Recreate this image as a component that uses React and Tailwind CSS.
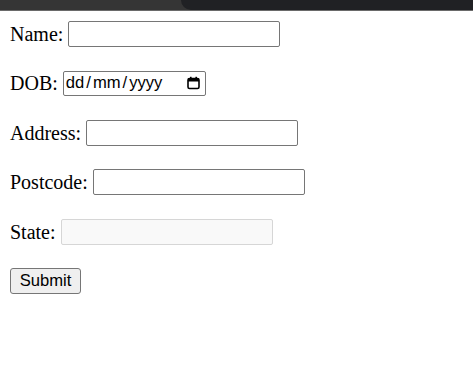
import React from 'react';

const serif = { fontFamily: '"Liberation Serif", "Times New Roman", serif' };

function TextBox({ width = 'w-[212px]', disabled = false }) {
  return (
    <input
      type="text"
      disabled={disabled}
      className={`${width} h-[26px] rounded-[2px] border px-[3px] outline-none ${
        disabled ? 'border-[#d6d6d6] bg-[#f9f9f9]' : 'border-[#767676] bg-white'
      }`}
    />
  );
}

function CalendarIcon() {
  return (
    <svg width="13" height="14" viewBox="0 0 13 14" className="shrink-0">
      <rect x="1" y="2.5" width="11" height="10" rx="1.5" fill="none" stroke="#000" strokeWidth="1.6" />
      <rect x="1" y="2.5" width="11" height="3" fill="#000" />
      <rect x="3" y="0.8" width="1.6" height="2.5" fill="#000" />
      <rect x="8.4" y="0.8" width="1.6" height="2.5" fill="#000" />
    </svg>
  );
}

function DateBox() {
  const sep = <span className="px-[2px]">/</span>;
  return (
    <div className="flex h-[25px] w-[143px] items-center justify-between rounded-[2px] border border-[#767676] bg-white pl-[2px] pr-[5px]">
      <span
        className="flex text-[16.6px] leading-none text-black"
        style={{ fontFamily: '"Liberation Sans", Arial, sans-serif' }}
      >
        dd{sep}mm{sep}yyyy
      </span>
      <CalendarIcon />
    </div>
  );
}

export default function App() {
  const rows = [
    { label: 'Name:', field: <TextBox /> },
    { label: 'DOB:', field: <DateBox /> },
    { label: 'Address:', field: <TextBox /> },
    { label: 'Postcode:', field: <TextBox /> },
    { label: 'State:', field: <TextBox disabled /> },
  ];

  return (
    <div className="min-h-[381px] bg-white" style={serif}>
      {/* browser chrome strip */}
      <div className="flex h-[10px] bg-[#353535]">
        <div className="ml-[181px] flex-1 rounded-bl-[10px] bg-[#202124]" />
      </div>
      <div className="h-px bg-[#6a6a6a]" />

      <form className="flex flex-col gap-[23.4px] px-[10px] pt-[10px]">
        {rows.map((row) => (
          <div key={row.label} className="flex h-[26px] items-center gap-[5px]">
            <label className="text-[20px] leading-none text-black">{row.label}</label>
            {row.field}
          </div>
        ))}
        <div className="flex h-[26px] items-center">
          <button
            type="button"
            className="h-[26px] w-[71px] rounded-[3px] border border-[#767676] bg-[#efefef] text-[16.6px] leading-none text-black"
            style={{ fontFamily: '"Liberation Sans", Arial, sans-serif' }}
          >
            Submit
          </button>
        </div>
      </form>
    </div>
  );
}
